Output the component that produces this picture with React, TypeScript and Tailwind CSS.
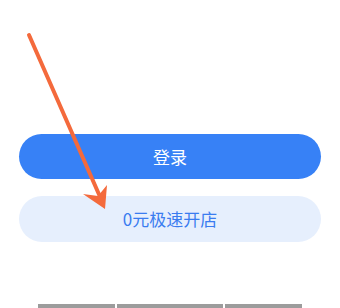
import React from "react";

const font = { fontFamily: '"Noto Sans CJK SC", "Noto Sans", sans-serif' };

export default function App() {
  return (
    <div className="relative h-[308px] w-[340px] overflow-hidden bg-white" style={font}>
      <div className="flex flex-col px-[19px] pt-[134px]">
        <button
          type="button"
          className="flex h-[45px] w-full items-center justify-center rounded-full bg-[#3781f6] text-[17px] text-white"
        >
          登录
        </button>
        <button
          type="button"
          className="mt-[17px] flex h-[46px] w-full items-center justify-center rounded-full bg-[#e6effd] text-[17px] text-[#3a7cf0]"
        >
          0元极速开店
        </button>
      </div>

      <div className="mt-[62px] flex gap-[2px] pl-[38px]">
        <div className="h-[4px] w-[77px] bg-[#9c9c9c]" />
        <div className="h-[4px] w-[106px] bg-[#9c9c9c]" />
        <div className="h-[4px] w-[77px] bg-[#9c9c9c]" />
      </div>

      {/* annotation arrow */}
      <svg className="pointer-events-none absolute left-0 top-0" width="340" height="308">
        <line x1="29" y1="35" x2="101" y2="199" stroke="#f46a3c" strokeWidth="4" strokeLinecap="round" />
        <polygon points="83,194 98,196 107,185 105,209" fill="#f46a3c" />
      </svg>
    </div>
  );
}
